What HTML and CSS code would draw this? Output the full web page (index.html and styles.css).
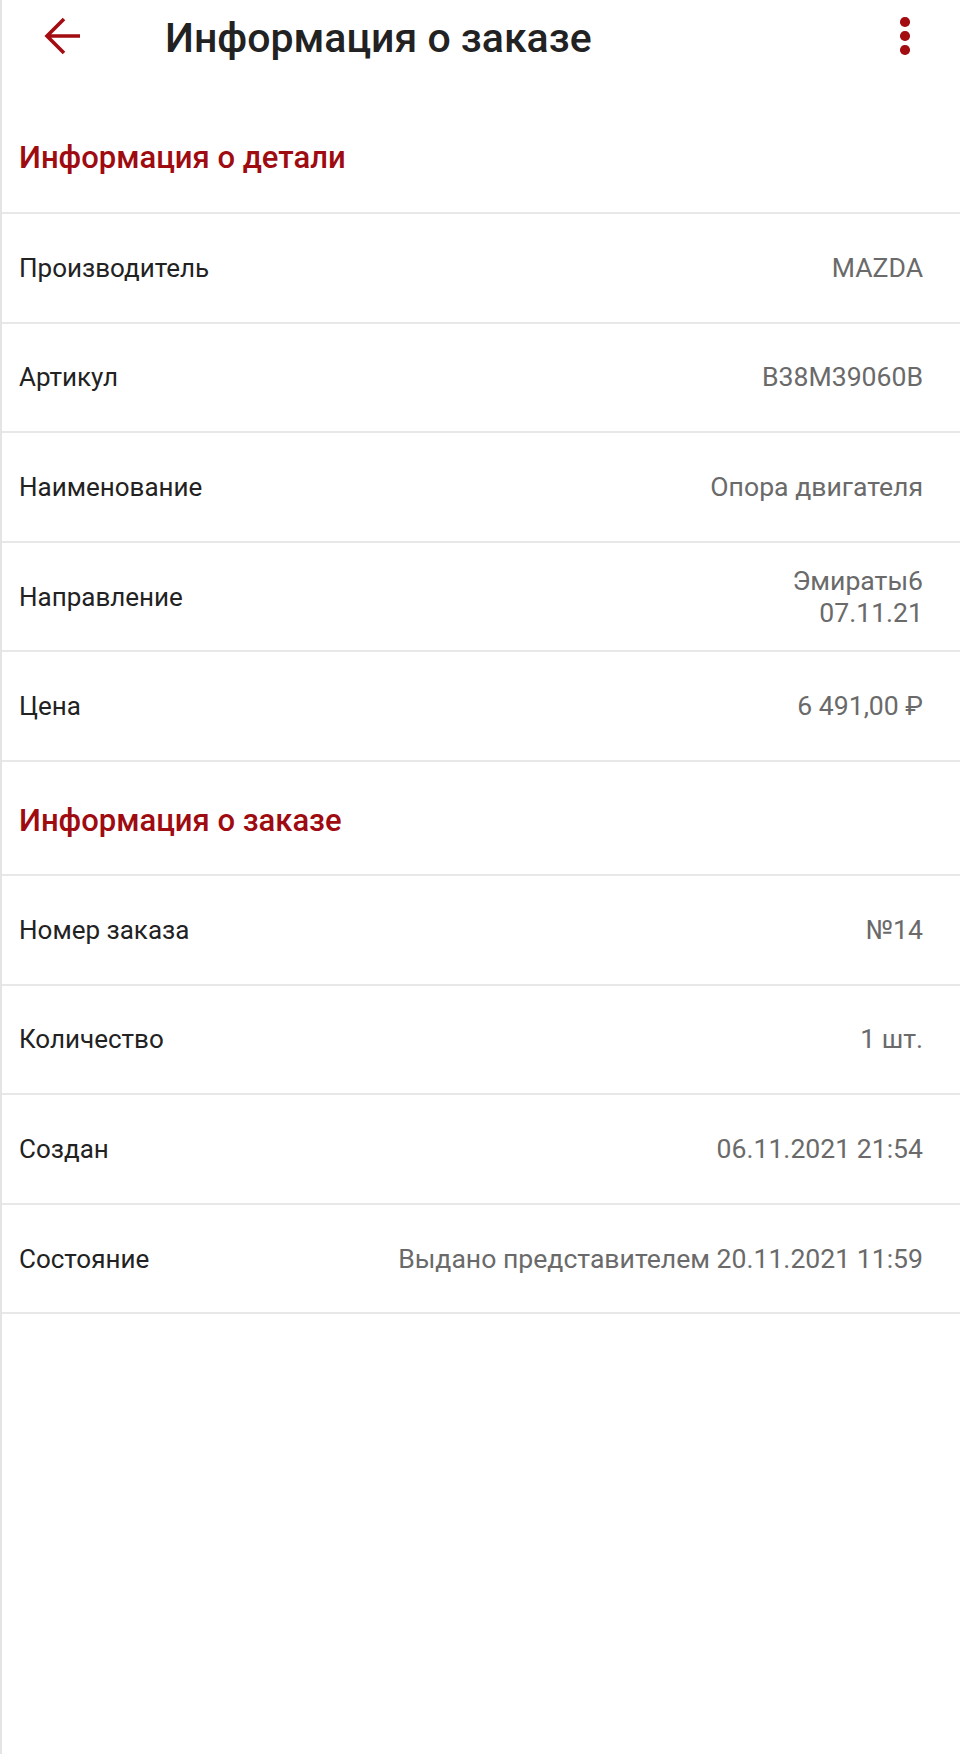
FILE: index.html
```html
<!DOCTYPE html>
<html lang="ru">
<head>
<meta charset="utf-8">
<title>Информация о заказе</title>
<link rel="stylesheet" href="styles.css">
</head>
<body>
<div class="page">
  <header class="topbar">
    <button class="icon-btn back" aria-label="Назад">
      <svg width="40" height="40" viewBox="0 0 40 40"><path d="M45 20H9M24 3L7 20l17 17" fill="none" stroke="#a30d12" stroke-width="3.6"/></svg>
    </button>
    <h1 class="title">Информация о заказе</h1>
    <button class="icon-btn more" aria-label="Меню">
      <span class="dot"></span><span class="dot"></span><span class="dot"></span>
    </button>
  </header>

  <section class="group first">
    <h2 class="group-title">Информация о детали</h2>
    <div class="row"><span class="label">Производитель</span><span class="value">MAZDA</span></div>
    <div class="row"><span class="label">Артикул</span><span class="value">B38M39060B</span></div>
    <div class="row"><span class="label">Наименование</span><span class="value">Опора двигателя</span></div>
    <div class="row"><span class="label">Направление</span><span class="value">Эмираты6<br>07.11.21</span></div>
    <div class="row"><span class="label">Цена</span><span class="value">6 491,00 ₽</span></div>
  </section>

  <section class="group">
    <h2 class="group-title">Информация о заказе</h2>
    <div class="row"><span class="label">Номер заказа</span><span class="value">№14</span></div>
    <div class="row"><span class="label">Количество</span><span class="value">1 шт.</span></div>
    <div class="row"><span class="label">Создан</span><span class="value">06.11.2021 21:54</span></div>
    <div class="row"><span class="label">Состояние</span><span class="value">Выдано представителем 20.11.2021 11:59</span></div>
  </section>
</div>
</body>
</html>
```

FILE: styles.css
```css
* { box-sizing: border-box; }
html, body { margin: 0; padding: 0; background: #fff; }
body {
  font-family: Roboto, "Noto Sans", "Liberation Sans", sans-serif;
  color: #222;
}
.page {
  min-height: 1754px;
  border-left: 2px solid #e4e4e4;
}
.topbar {
  height: 72px;
  display: flex;
  align-items: center;
  padding: 0 49px 0 38px;
}
.icon-btn {
  background: none;
  border: 0;
  padding: 0;
  margin: 0;
  cursor: pointer;
}
.back {
  width: 40px;
  height: 40px;
  display: flex;
}
.title {
  margin: 0 0 0 85px;
  flex: 1;
  font-size: 41px;
  font-weight: 500;
  color: #222;
  line-height: 46px;
  padding-top: 4px;
}
.more {
  width: 12px;
  display: flex;
  flex-direction: column;
  align-items: center;
  gap: 4.5px;
  margin-top: 0;
}
.dot {
  width: 9.5px;
  height: 9.5px;
  border-radius: 50%;
  background: #a30d12;
}
.group.first { margin-top: 28px; }
.group-title {
  margin: 0;
  height: 114px;
  display: flex;
  align-items: center;
  padding: 2px 0 0 17px;
  font-size: 31px;
  font-weight: 500;
  color: #9e0b10;
  border-bottom: 2px solid #e8e8e8;
}
.group:not(.first) .group-title { padding-top: 6px; }
.row {
  height: 109.6px;
  display: flex;
  align-items: center;
  justify-content: space-between;
  padding: 0 37px 0 17px;
  border-bottom: 2px solid #e8e8e8;
  font-size: 26px;
}
.label { color: #222; }
.value {
  color: #6a6a6a;
  text-align: right;
  font-size: 26.6px;
  line-height: 32px;
}
```
